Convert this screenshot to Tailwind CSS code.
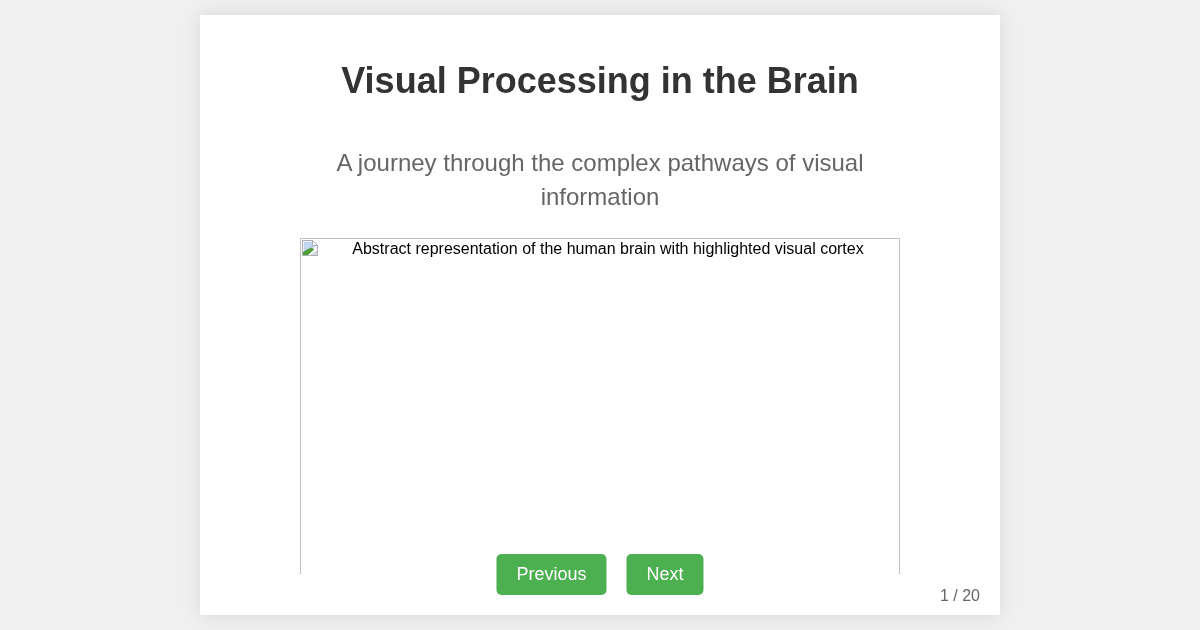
<!DOCTYPE html>
<html lang="en">
<head>
  <meta charset="UTF-8">
  <meta name="viewport" content="width=device-width, initial-scale=1.0">
  <title>Visual Processing in the Brain</title>
  <script src="https://cdn.jsdelivr.net/npm/@tailwindcss/browser@4"></script>
</head>
<body class="bg-[#f0f0f0] h-screen flex items-center justify-center overflow-hidden font-['Liberation_Sans',Arial,sans-serif]">

  <!-- Slide -->
  <div class="relative w-[800px] h-[600px] bg-white shadow-[0_0_20px_rgba(0,0,0,0.1)] pt-10 px-10 pb-[41px] will-change-transform">
    <div class="h-full flex flex-col items-center overflow-hidden">
      <h1 class="mt-[5px] text-[36px] leading-[41px] font-bold text-[#333] text-center">Visual Processing in the Brain</h1>
      <p class="mt-[45px] w-[600px] text-[24px] leading-[34px] text-[#666] text-center">A journey through the complex pathways of visual information</p>

      <!-- Broken image placeholder -->
      <div class="mt-6 w-[600px] h-[400px] shrink-0 border border-[#c0c0c0] p-px text-center text-[16px] leading-[18px] text-black">
        <svg class="float-left w-4 h-4" viewBox="0 0 16 16" aria-hidden="true">
          <path d="M0.5 0.5H10.5L15.5 5.5V15.5H0.5Z" fill="#eef2f8" stroke="#a9adb5"/>
          <path d="M10.5 0.5V5.5H15.5Z" fill="#fff" stroke="#a9adb5"/>
          <path d="M2 2H10V6H14L3 12H2Z" fill="#c3d5f3"/>
          <path d="M1 15V12L6 9L10 7.5L12 9.5L6 15Z" fill="#4f9d34"/>
          <path d="M7 16L14.5 8.5L16 10V11L15 11.5V15H7Z" fill="#fff"/>
          <path d="M9 14.5L15 10V15H9Z" fill="#d5d8dc"/>
          <path d="M15.5 10V15.5H8.5" fill="none" stroke="#a9adb5"/>
        </svg>
        Abstract representation of the human brain with highlighted visual cortex
      </div>
    </div>

    <!-- Navigation -->
    <div class="absolute bottom-5 left-1/2 -translate-x-1/2 flex gap-5">
      <button class="bg-[#4CAF50] text-white text-[18px] leading-[21px] px-5 py-[10px] rounded-[5px]">Previous</button>
      <button class="bg-[#4CAF50] text-white text-[18px] leading-[21px] px-5 py-[10px] rounded-[5px]">Next</button>
    </div>

    <div class="absolute bottom-[10px] right-5 text-[16px] leading-[18px] text-[#666]">1 / 20</div>
  </div>

</body>
</html>
